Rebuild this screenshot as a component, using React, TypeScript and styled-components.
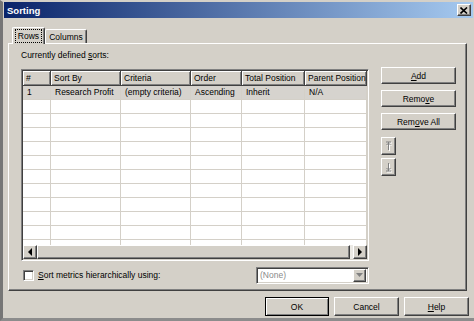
import React from "react";
import styled, { createGlobalStyle, css } from "styled-components";

const GlobalStyle = createGlobalStyle`
  html, body {
    margin: 0;
    padding: 0;
    background: #d4d0c8;
  }
  body {
    font-family: "Liberation Sans", Arial, sans-serif;
    font-size: 8.5px;
    color: #000;
  }
`;

const raised = css`
  background: #d4d0c8;
  border-style: solid;
  border-width: 1px;
  border-color: #ffffff #404040 #404040 #ffffff;
  box-shadow: inset -1px -1px 0 #808080, inset 1px 1px 0 #d4d0c8;
`;

const sunken = css`
  border-style: solid;
  border-width: 1px;
  border-color: #808080 #ffffff #ffffff #808080;
  box-shadow: inset 1px 1px 0 #404040, inset -1px -1px 0 #d4d0c8;
`;

const Frame = styled.div`
  width: 474px;
  height: 321px;
  box-sizing: border-box;
  background: #d4d0c8;
  border-left: 3px solid #767676;
  border-top: 2px solid #d4d0c8;
  border-bottom: 3px solid #8c8c8c;
  padding-left: 1px;
  display: flex;
  flex-direction: column;
`;

const TitleBar = styled.div`
  height: 16px;
  margin-right: 1px;
  background: linear-gradient(to right, #0a246a, #a6caf0);
  display: flex;
  align-items: center;
  justify-content: space-between;
  padding: 0 2px 0 3px;
`;

const Title = styled.span`
  color: #fff;
  font-weight: bold;
  font-size: 9.5px;
`;

const CloseButton = styled.div`
  ${raised};
  width: 12px;
  height: 10px;
  display: flex;
  align-items: center;
  justify-content: center;
`;

const Body = styled.div`
  padding: 9px 0 0 4px;
  display: flex;
  flex-direction: column;
`;

const TabRow = styled.div`
  display: flex;
  align-items: flex-end;
  height: 16px;
  padding-left: 4px;
  position: relative;
  z-index: 1;
`;

const Tab = styled.div<{ $active?: boolean }>`
  box-sizing: border-box;
  background: #d4d0c8;
  border: 1px solid #ffffff;
  border-right: 1px solid #404040;
  border-bottom: none;
  border-radius: 2px 2px 0 0;
  box-shadow: inset -1px 0 0 #808080;
  display: flex;
  align-items: center;
  justify-content: center;
  height: ${(p) => (p.$active ? "17px" : "14px")};
  width: ${(p) => (p.$active ? "33px" : "42px")};
  margin-bottom: ${(p) => (p.$active ? "-1px" : "0")};
`;

const TabLabel = styled.span<{ $focus?: boolean }>`
  padding: 1px 2px;
  outline: ${(p) => (p.$focus ? "1px dotted #000" : "none")};
  line-height: 10px;
`;

const Panel = styled.div`
  box-sizing: border-box;
  width: 459px;
  height: 248px;
  background: #d4d0c8;
  border-style: solid;
  border-width: 1px;
  border-color: #ffffff #404040 #404040 #ffffff;
  box-shadow: inset -1px -1px 0 #808080;
  padding: 6px 0 0 12px;
  display: flex;
  gap: 12px;
`;

const LeftCol = styled.div`
  display: flex;
  flex-direction: column;
  width: 348px;
`;

const Label = styled.div`
  height: 11px;
  line-height: 11px;
`;

const U = styled.span`
  text-decoration: underline;
`;

const Table = styled.div`
  ${sunken};
  box-sizing: border-box;
  margin-top: 8px;
  width: 348px;
  height: 192px;
  background: #fff;
  padding: 1px;
  display: flex;
  flex-direction: column;
  overflow: hidden;
`;

const cols = "28px 70px 70px 51px 63px 1fr";

const HeaderRow = styled.div`
  display: grid;
  grid-template-columns: ${cols};
  height: 15px;
  flex-shrink: 0;
`;

const HeaderCell = styled.div`
  box-sizing: border-box;
  background: #d4d0c8;
  border-right: 1px solid #404040;
  border-bottom: 1px solid #404040;
  box-shadow: inset 1px 1px 0 #fff, inset -1px -1px 0 #808080;
  padding-left: 3px;
  line-height: 14px;
  white-space: nowrap;
  overflow: hidden;
`;

const Rows = styled.div`
  flex: 1;
  overflow: hidden;
`;

const Row = styled.div<{ $selected?: boolean }>`
  display: grid;
  grid-template-columns: ${cols};
  height: 14px;
  background: ${(p) => (p.$selected ? "#d6d3ce" : "#fff")};
`;

const Cell = styled.div`
  box-sizing: border-box;
  border-right: 1px solid #d4d0c8;
  border-bottom: 1px solid #d4d0c8;
  padding-left: 4px;
  line-height: 13px;
  white-space: nowrap;
  overflow: hidden;
`;

const ScrollBar = styled.div`
  display: flex;
  height: 14px;
  flex-shrink: 0;
  background: #ebe9e4;
`;

const ScrollButton = styled.div`
  ${raised};
  box-sizing: border-box;
  width: 14px;
  height: 14px;
  display: flex;
  align-items: center;
  justify-content: center;
`;

const Thumb = styled.div`
  ${raised};
  box-sizing: border-box;
  flex: 1;
  margin-right: 3px;
`;

const OptionRow = styled.div`
  display: flex;
  align-items: center;
  height: 18px;
  margin-top: 5px;
  padding-left: 2px;
`;

const CheckBox = styled.div`
  ${sunken};
  box-sizing: border-box;
  width: 11px;
  height: 11px;
  background: #fff;
  margin-right: 4px;
`;

const Combo = styled.div`
  ${sunken};
  box-sizing: border-box;
  margin-left: auto;
  width: 113px;
  height: 17px;
  background: #fff;
  display: flex;
  align-items: center;
  padding: 2px;
  color: #8a8a8a;
`;

const ComboText = styled.span`
  flex: 1;
  padding-left: 1px;
`;

const ComboArrow = styled.div`
  ${raised};
  box-sizing: border-box;
  width: 13px;
  height: 13px;
  display: flex;
  align-items: center;
  justify-content: center;
`;

const RightCol = styled.div`
  display: flex;
  flex-direction: column;
  padding-top: 17px;
`;

const Button = styled.div<{ $w?: number; $default?: boolean }>`
  ${raised};
  box-sizing: border-box;
  width: ${(p) => p.$w ?? 75}px;
  height: 17px;
  display: flex;
  align-items: center;
  justify-content: center;
  ${(p) =>
    p.$default &&
    css`
      outline: 1px solid #000;
      outline-offset: -1px;
      border-color: #000 #404040 #404040 #000;
      box-shadow: inset 1px 1px 0 #fff, inset -1px -1px 0 #808080;
    `}
`;

const SideButton = styled(Button)`
  margin-bottom: 6px;
`;

const ArrowButton = styled(Button)`
  width: 15px;
  height: 18px;
  margin-top: 1px;
  margin-bottom: 2px;
`;

const Footer = styled.div`
  display: flex;
  justify-content: flex-end;
  gap: 5px;
  padding: 6px 5px 0 0;
`;

const FooterButton = styled(Button)`
  height: 19px;
`;

const CloseIcon = () => (
  <svg width="8" height="7" viewBox="0 0 8 7">
    <path d="M0.5 0.5 L7 6.5 M7 0.5 L0.5 6.5" stroke="#000" strokeWidth="1.6" />
  </svg>
);

const Triangle = ({ dir, color = "#000" }: { dir: "left" | "right" | "down"; color?: string }) => {
  const d =
    dir === "left" ? "M4 0 L0 4 L4 8 Z" : dir === "right" ? "M0 0 L4 4 L0 8 Z" : "M0 0 L7 0 L3.5 4 Z";
  const w = dir === "down" ? 7 : 4;
  const h = dir === "down" ? 4 : 8;
  return (
    <svg width={w} height={h} viewBox={`0 0 ${w} ${h}`}>
      <path d={d} fill={color} />
    </svg>
  );
};

const MoveIcon = ({ up }: { up?: boolean }) => {
  const shape = up ? "M1 1 H6 M3.5 1 V9 M1.5 4 L3.5 2 L5.5 4" : "M1 9 H6 M3.5 1 V9 M1.5 6 L3.5 8 L5.5 6";
  return (
    <svg width="8" height="11" viewBox="0 0 8 11">
      <path d={shape} stroke="#fff" strokeWidth="1" fill="none" transform="translate(1 1)" />
      <path d={shape} stroke="#808080" strokeWidth="1" fill="none" />
    </svg>
  );
};

const headers = ["#", "Sort By", "Criteria", "Order", "Total Position", "Parent Position"];
const data = [["1", "Research Profit", "(empty criteria)", "Ascending", "Inherit", "N/A"]];
const EMPTY_ROWS = 11;

export default function App() {
  const rows = [...data, ...Array.from({ length: EMPTY_ROWS }, () => headers.map(() => ""))];
  return (
    <>
      <GlobalStyle />
      <Frame>
        <TitleBar>
          <Title>Sorting</Title>
          <CloseButton>
            <CloseIcon />
          </CloseButton>
        </TitleBar>
        <Body>
          <TabRow>
            <Tab $active>
              <TabLabel $focus>Rows</TabLabel>
            </Tab>
            <Tab>
              <TabLabel>Columns</TabLabel>
            </Tab>
          </TabRow>
          <Panel>
            <LeftCol>
              <Label>
                Currently defined <U>s</U>orts:
              </Label>
              <Table>
                <HeaderRow>
                  {headers.map((h) => (
                    <HeaderCell key={h}>{h}</HeaderCell>
                  ))}
                </HeaderRow>
                <Rows>
                  {rows.map((r, i) => (
                    <Row key={i} $selected={i === 0}>
                      {r.map((c, j) => (
                        <Cell key={j}>{c}</Cell>
                      ))}
                    </Row>
                  ))}
                </Rows>
                <ScrollBar>
                  <ScrollButton>
                    <Triangle dir="left" />
                  </ScrollButton>
                  <Thumb />
                  <ScrollButton>
                    <Triangle dir="right" />
                  </ScrollButton>
                </ScrollBar>
              </Table>
              <OptionRow>
                <CheckBox />
                <span>
                  <U>S</U>ort metrics hierarchically using:
                </span>
                <Combo>
                  <ComboText>(None)</ComboText>
                  <ComboArrow>
                    <Triangle dir="down" color="#808080" />
                  </ComboArrow>
                </Combo>
              </OptionRow>
            </LeftCol>
            <RightCol>
              <SideButton>
                <span>
                  <U>A</U>dd
                </span>
              </SideButton>
              <SideButton>
                <span>
                  Remo<U>v</U>e
                </span>
              </SideButton>
              <SideButton>
                <span>
                  Rem<U>o</U>ve All
                </span>
              </SideButton>
              <ArrowButton>
                <MoveIcon up />
              </ArrowButton>
              <ArrowButton>
                <MoveIcon />
              </ArrowButton>
            </RightCol>
          </Panel>
          <Footer>
            <FooterButton $w={64} $default>
              OK
            </FooterButton>
            <FooterButton $w={65}>Cancel</FooterButton>
            <FooterButton $w={65}>
              <span>
                <U>H</U>elp
              </span>
            </FooterButton>
          </Footer>
        </Body>
      </Frame>
    </>
  );
}
